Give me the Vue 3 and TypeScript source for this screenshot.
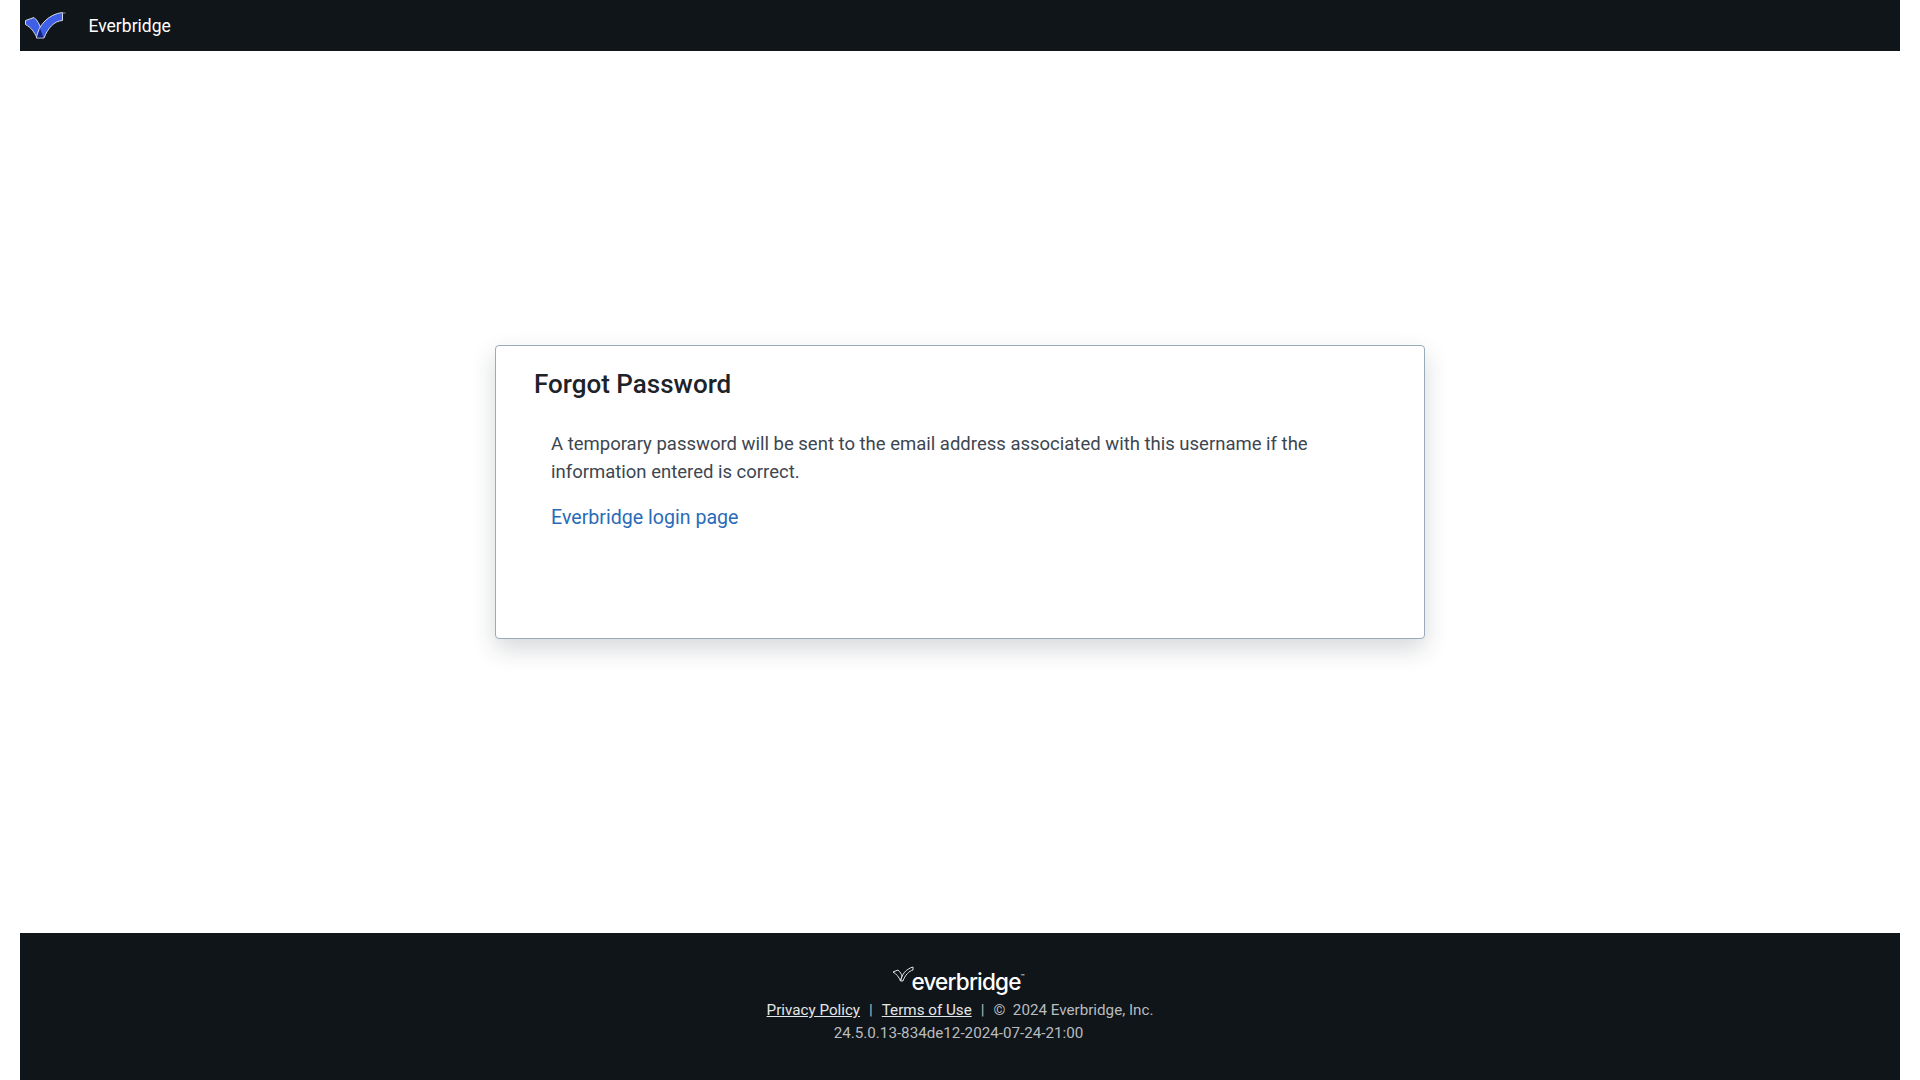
<script setup lang="ts">
const year = 2024
const version = '24.5.0.13-834de12-2024-07-24-21:00'
</script>

<template>
  <div class="page">
    <header class="topbar">
      <svg class="mark" viewBox="0 0 44 30" width="44" height="30">
        <path class="wing" d="M1.5 9.5 L10 6.5 C13.5 9.5 15.5 13 16.5 17 L13 27 C10.500 21 6.5 16 1.5 13.5 Z" />
        <path class="wing" d="M12.5 27 C14 14 25 3 38.5 1.5 L38.5 9.5 C30 10 24 17 20 27 Z" />
        <path class="core" d="M13 26.5 L16 17.5 L19.500 26.500 Z" />
        <path class="tick" d="M38.5 2 h3" />
      </svg>
      <span class="brand">Everbridge</span>
    </header>

    <main class="content">
      <section class="card">
        <h1>Forgot Password</h1>
        <div class="body">
          <p>A temporary password will be sent to the email address associated with this username if the information entered is correct.</p>
          <a href="#" class="login">Everbridge login page</a>
        </div>
      </section>
    </main>

    <footer class="foot">
      <div class="wordmark">
        <svg class="mini" viewBox="0 0 22 18" width="22" height="18">
          <path d="M1 6 L6 4 C8 6 9.5 8 10 10 L8.5 15 C7 11 4.5 8 1 6 Z" />
          <path d="M8.5 15 C10 8 14 3 21 1 L21 4 C17 5 13 9 11 15 Z" />
        </svg>
        <span>everbridge</span><i>™</i>
      </div>
      <div class="links">
        <a href="#">Privacy Policy</a>
        <span class="sep">|</span>
        <a href="#">Terms of Use</a>
        <span class="sep">|</span>
        <span>©&nbsp; {{ year }} Everbridge, Inc.</span>
      </div>
      <div class="version">{{ version }}</div>
    </footer>
  </div>
</template>

<style>
html,
body {
  background: #fff;
}
</style>

<style scoped>
.page {
  display: flex;
  flex-direction: column;
  height: 1080px;
  padding: 0 20px;
  box-sizing: border-box;
  font-family: Roboto, "Liberation Sans", sans-serif;
  overflow: hidden;
}

.topbar {
  display: flex;
  align-items: center;
  flex: none;
  height: 51px;
  background: #101519;
  color: #fff;
  padding-left: 4px;
}

.mark {
  flex: none;
  margin-top: 1px;
}

.wing {
  fill: #3f5fe6;
  stroke: #d5d9e4;
  stroke-width: 1;
}

.core {
  fill: #16237f;
}

.tick {
  stroke: #8a8d92;
  stroke-width: 1;
}

.brand {
  margin-left: 20.5px;
  font-size: 17.5px;
}

.content {
  flex: 1;
  padding-top: 294px;
}

.card {
  box-sizing: border-box;
  width: 930px;
  height: 294px;
  margin-left: 475px;
  padding: 22px 38px;
  background: #fff;
  border: 1px solid #9aaab9;
  border-radius: 4px;
  box-shadow: 0 10px 24px rgba(30, 40, 50, 0.18);
}

h1 {
  margin: 0;
  font-size: 26px;
  line-height: 32px;
  font-weight: 500;
  color: #1d2329;
}

.body {
  padding: 30px 17px 0;
}

p {
  margin: 0;
  font-size: 18.5px;
  line-height: 28px;
  color: #3c4650;
}

.login {
  display: block;
  margin-top: 18px;
  font-size: 19.6px;
  line-height: 27px;
  color: #2a6bb8;
  text-decoration: none;
}

.foot {
  flex: none;
  height: 147px;
  background: #101519;
  color: #b9bcbf;
  padding-top: 34px;
  box-sizing: border-box;
  text-align: center;
  font-size: 15.2px;
}

.wordmark {
  display: flex;
  justify-content: center;
  align-items: flex-start;
  height: 32px;
  padding-right: 4px;
  color: #fff;
  font-family: Inter, Roboto, sans-serif;
  font-size: 22.5px;
  letter-spacing: -0.8px;
  line-height: 30px;
  font-weight: 500;
}

.wordmark i {
  font-style: normal;
  font-size: 6px;
  line-height: 20px;
}

.mini {
  flex: none;
  fill: none;
  stroke: #e2e4e6;
  stroke-width: 1;
  margin-top: -1px;
  margin-right: -3px;
}

.links {
  display: flex;
  justify-content: center;
  gap: 9px;
  line-height: 23px;
}

.links a {
  color: #e3e5e7;
}

.version {
  line-height: 23px;
  margin-left: -3px;
}
</style>
